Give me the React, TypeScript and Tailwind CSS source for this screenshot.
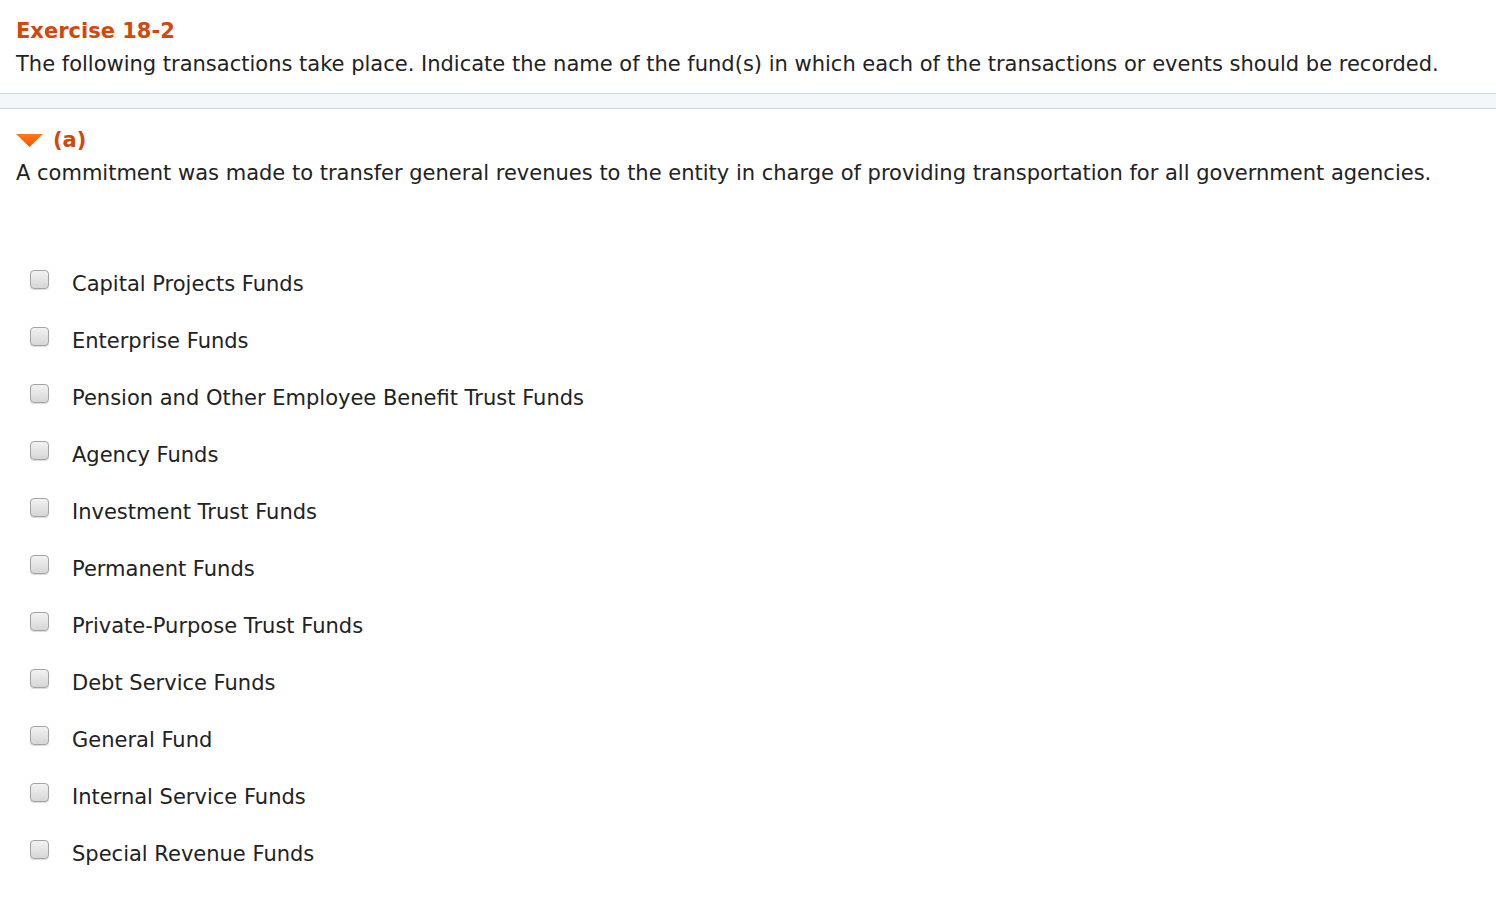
import React from 'react';

const funds = [
  'Capital Projects Funds',
  'Enterprise Funds',
  'Pension and Other Employee Benefit Trust Funds',
  'Agency Funds',
  'Investment Trust Funds',
  'Permanent Funds',
  'Private-Purpose Trust Funds',
  'Debt Service Funds',
  'General Fund',
  'Internal Service Funds',
  'Special Revenue Funds',
];

function Box() {
  return (
    <span className="block shrink-0 w-[19px] h-[19px] rounded-[4px] border border-[#a3a3a3] bg-gradient-to-b from-[#f2f2f2] to-[#d6d6d6] shadow-[0_1px_1px_rgba(0,0,0,0.15)]" />
  );
}

export default function App() {
  return (
    <div className="min-h-screen bg-white text-[#222] font-['DejaVu_Sans',Verdana,sans-serif] text-[21px]">
      <div className="px-4 pt-[17px]">
        <h1 className="text-[21px] leading-[28px] font-bold text-[#d2480a]">Exercise 18-2</h1>
        <p className="mt-[5px] leading-[28px]">
          The following transactions take place. Indicate the name of the fund(s) in which each of the transactions or events should be recorded.
        </p>
      </div>

      <div className="mt-[15px] h-[16px] border-y border-[#cdd5e0] bg-[#f4f7fa]" />

      <div className="px-4 pt-[17px]">
        <div className="flex items-center gap-[10px]">
          <svg width="27" height="14" viewBox="0 0 27 14">
            <defs>
              <linearGradient id="tri" x1="0" y1="0" x2="0" y2="1">
                <stop offset="0" stopColor="#ff7a1a" />
                <stop offset="1" stopColor="#f25500" />
              </linearGradient>
            </defs>
            <polygon points="0,1 27,1 13.5,14" fill="url(#tri)" />
          </svg>
          <span className="leading-[28px] font-bold text-[#d2480a]">(a)</span>
        </div>
        <p className="mt-[5px] leading-[28px]">
          A commitment was made to transfer general revenues to the entity in charge of providing transportation for all government agencies.
        </p>
      </div>

      <ul className="mt-[78px] pl-[30px] flex flex-col gap-[29px]">
        {funds.map((f) => (
          <li key={f} className="flex items-center h-[28px]">
            <Box />
            <span className="ml-[23px] leading-[28px] relative top-[5px]">{f}</span>
          </li>
        ))}
      </ul>
    </div>
  );
}
